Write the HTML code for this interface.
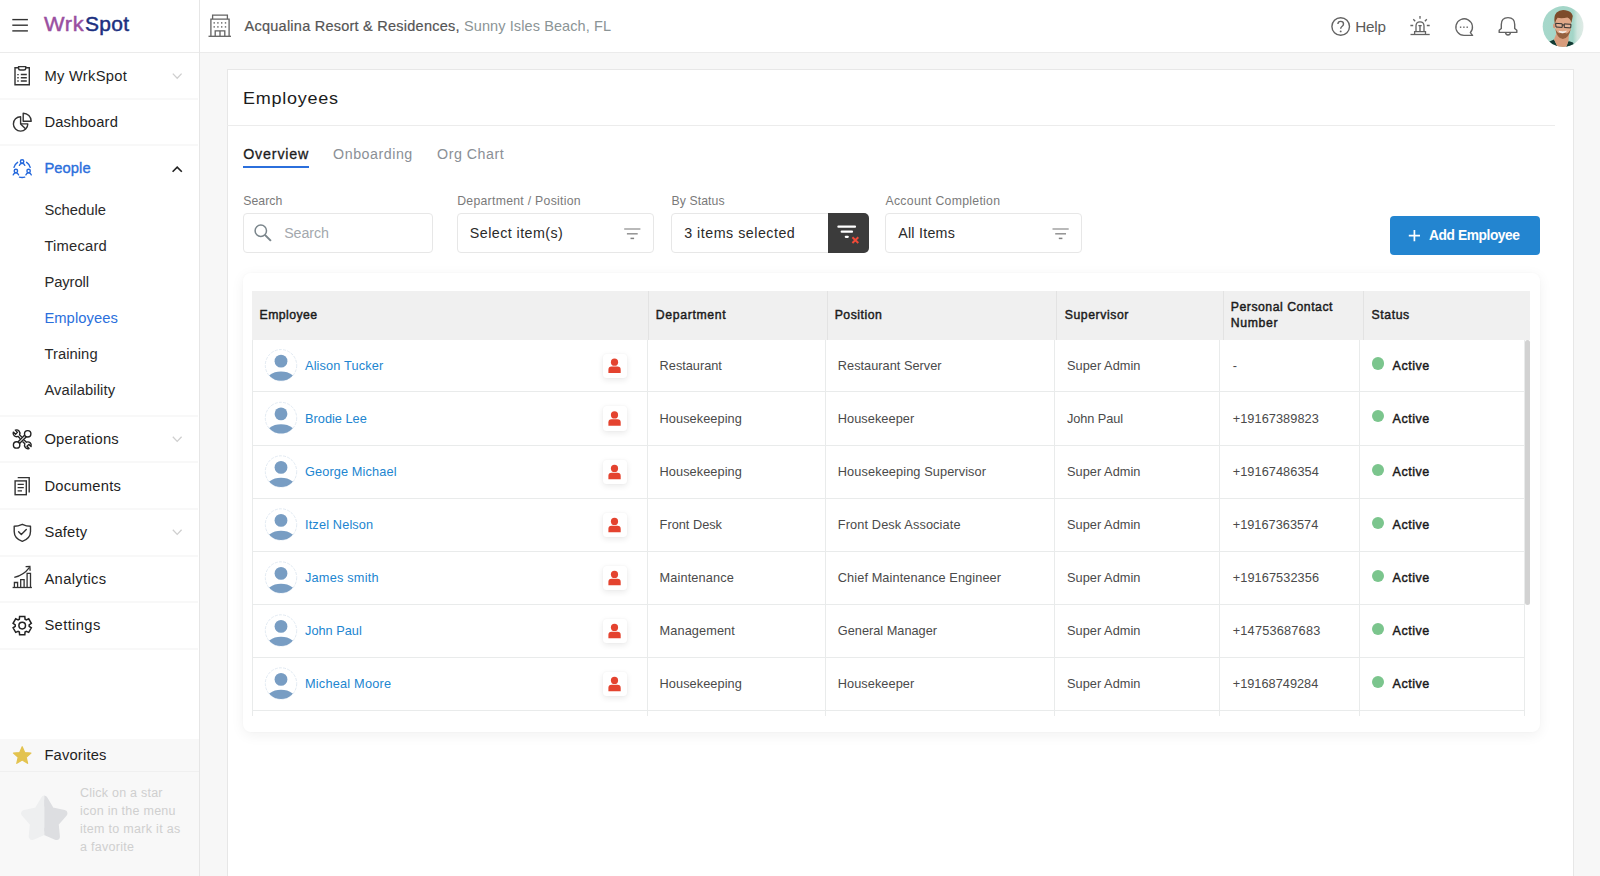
<!DOCTYPE html>
<html lang="en"><head><meta charset="utf-8"><title>WrkSpot - Employees</title>
<style>
html,body{margin:0;padding:0}
body{width:1600px;height:876px;overflow:hidden;background:#f7f7f7;font-family:"Liberation Sans",Arial,sans-serif;position:relative}
.t{position:absolute;white-space:pre;display:block}
.b{position:absolute;box-sizing:border-box}
svg{position:absolute;overflow:visible}
</style></head><body>
<div class="b" style="left:0px;top:0px;width:1600px;height:53px;background:#fff;border-bottom:1px solid #ebebeb;"></div>
<div class="b" style="left:0px;top:0px;width:200px;height:876px;background:#fff;border-right:1px solid #e6e6e6;"></div>
<div class="b" style="left:0px;top:52px;width:199px;height:1px;background:#ebebeb;"></div>
<div class="b" style="left:227px;top:69px;width:1347px;height:830px;background:#fff;border:1px solid #e7e7e7;"></div>
<div class="b" style="left:227px;top:125px;width:1328px;height:1px;background:#ececec;"></div>
<aside aria-label="Main navigation">
<div class="b" style="left:0px;top:98px;width:198px;height:2px;background:#f8f8f8;"></div>
<div class="b" style="left:0px;top:144px;width:198px;height:2px;background:#f8f8f8;"></div>
<div class="b" style="left:0px;top:415.3px;width:198px;height:2px;background:#f8f8f8;"></div>
<div class="b" style="left:0px;top:461.3px;width:198px;height:2px;background:#f8f8f8;"></div>
<div class="b" style="left:0px;top:508px;width:198px;height:2px;background:#f8f8f8;"></div>
<div class="b" style="left:0px;top:554.5px;width:198px;height:2px;background:#f8f8f8;"></div>
<div class="b" style="left:0px;top:601.4px;width:198px;height:2px;background:#f8f8f8;"></div>
<div class="b" style="left:0px;top:648.3px;width:198px;height:2px;background:#f8f8f8;"></div>
<span class="t" style="left:44.40px;top:66.00px;font-size:14.75px;line-height:20px;color:#1f1f1f;letter-spacing:0.262px;">My WrkSpot</span>
<span class="t" style="left:44.40px;top:112.00px;font-size:14.75px;line-height:20px;color:#1f1f1f;letter-spacing:0.168px;">Dashboard</span>
<span class="t" style="left:44.40px;top:158.00px;font-size:14.75px;line-height:20px;color:#2b6fdc;letter-spacing:0.054px;-webkit-text-stroke:0.35px #2b6fdc;">People</span>
<span class="t" style="left:44.40px;top:200.00px;font-size:14.75px;line-height:20px;color:#2a2a2a;letter-spacing:-0.001px;">Schedule</span>
<span class="t" style="left:44.40px;top:236.00px;font-size:14.75px;line-height:20px;color:#2a2a2a;letter-spacing:0.211px;">Timecard</span>
<span class="t" style="left:44.40px;top:272.00px;font-size:14.75px;line-height:20px;color:#2a2a2a;letter-spacing:-0.081px;">Payroll</span>
<span class="t" style="left:44.40px;top:308.00px;font-size:14.75px;line-height:20px;color:#2b6fdc;letter-spacing:0.054px;">Employees</span>
<span class="t" style="left:44.40px;top:344.00px;font-size:14.75px;line-height:20px;color:#2a2a2a;letter-spacing:0.065px;">Training</span>
<span class="t" style="left:44.40px;top:380.00px;font-size:14.75px;line-height:20px;color:#2a2a2a;letter-spacing:0.117px;">Availability</span>
<span class="t" style="left:44.40px;top:429.00px;font-size:14.75px;line-height:20px;color:#1f1f1f;letter-spacing:0.239px;">Operations</span>
<span class="t" style="left:44.40px;top:476.00px;font-size:14.75px;line-height:20px;color:#1f1f1f;letter-spacing:0.250px;">Documents</span>
<span class="t" style="left:44.40px;top:522.00px;font-size:14.75px;line-height:20px;color:#1f1f1f;letter-spacing:0.197px;">Safety</span>
<span class="t" style="left:44.40px;top:569.00px;font-size:14.75px;line-height:20px;color:#1f1f1f;letter-spacing:0.347px;">Analytics</span>
<span class="t" style="left:44.40px;top:615.00px;font-size:14.75px;line-height:20px;color:#1f1f1f;letter-spacing:0.372px;">Settings</span>
<div class="b" style="left:0px;top:739px;width:199px;height:137px;background:#f8f8f8;"></div>
<div class="b" style="left:0px;top:771px;width:199px;height:1px;background:#f0f0f0;"></div>
<span class="t" style="left:44.40px;top:745.00px;font-size:14.75px;line-height:20px;color:#1f1f1f;letter-spacing:0.168px;">Favorites</span>
<span class="t" style="left:80.00px;top:783.00px;font-size:12.5px;line-height:20px;color:#cfcfcf;letter-spacing:0.236px;">Click on a star</span>
<span class="t" style="left:80.00px;top:801.00px;font-size:12.5px;line-height:20px;color:#cfcfcf;letter-spacing:0.252px;">icon in the menu</span>
<span class="t" style="left:80.00px;top:819.00px;font-size:12.5px;line-height:20px;color:#cfcfcf;letter-spacing:0.296px;">item to mark it as</span>
<span class="t" style="left:80.00px;top:837.00px;font-size:12.5px;line-height:20px;color:#cfcfcf;letter-spacing:0.287px;">a favorite</span>
</aside>
<header>
<span class="t" style="left:43.80px;top:14.00px;font-size:19.8px;line-height:20px;color:#9a4fa0;letter-spacing:0.588px;-webkit-text-stroke:0.45px #9a4fa0;transform:scaleX(1.1);transform-origin:0 0;">Wrk</span>
<span class="t" style="left:85.20px;top:14.00px;font-size:19.8px;line-height:20px;color:#1b2f80;letter-spacing:0.322px;-webkit-text-stroke:0.45px #1b2f80;transform:scaleX(1.06);transform-origin:0 0;">Spot</span>
<span class="t" style="left:244.60px;top:16.00px;font-size:14.5px;line-height:20px;color:#555;letter-spacing:0.240px;-webkit-text-stroke:0.2px #555;">Acqualina Resort &amp; Residences,</span>
<span class="t" style="left:464.00px;top:16.00px;font-size:14.5px;line-height:20px;color:#8b9496;letter-spacing:0.096px;">Sunny Isles Beach, FL</span>
<span class="t" style="left:1355.30px;top:17.00px;font-size:15.25px;line-height:20px;color:#5a5a5a;letter-spacing:-0.255px;">Help</span>
</header>
<main>
<span class="t" style="left:242.60px;top:89.00px;font-size:17px;line-height:20px;color:#1c1c1c;letter-spacing:0.691px;transform:scaleX(1.06);transform-origin:0 0;">Employees</span>
<span class="t" style="left:243.20px;top:144.00px;font-size:14.25px;line-height:20px;color:#1c1c1c;letter-spacing:0.830px;-webkit-text-stroke:0.3px #1c1c1c;">Overview</span>
<div class="b" style="left:243px;top:165.5px;width:65.5px;height:2px;background:#2b6fdc;"></div>
<span class="t" style="left:333.10px;top:144.00px;font-size:14.25px;line-height:20px;color:#8b9096;letter-spacing:0.525px;">Onboarding</span>
<span class="t" style="left:437.10px;top:144.00px;font-size:14.25px;line-height:20px;color:#8b9096;letter-spacing:0.505px;">Org Chart</span>
<span class="t" style="left:243.20px;top:191.00px;font-size:12.25px;line-height:20px;color:#7a7a7a;letter-spacing:0.057px;">Search</span>
<span class="t" style="left:457.20px;top:191.00px;font-size:12.25px;line-height:20px;color:#7a7a7a;letter-spacing:0.285px;">Department / Position</span>
<span class="t" style="left:671.50px;top:191.00px;font-size:12.25px;line-height:20px;color:#7a7a7a;letter-spacing:0.084px;">By Status</span>
<span class="t" style="left:885.50px;top:191.00px;font-size:12.25px;line-height:20px;color:#7a7a7a;letter-spacing:0.287px;">Account Completion</span>
<div class="b" style="left:243px;top:213px;width:190px;height:40px;background:#fff;border:1px solid #e7e7e7;border-radius:4px;"></div>
<div class="b" style="left:457px;top:213px;width:197px;height:40px;background:#fff;border:1px solid #e7e7e7;border-radius:4px;"></div>
<div class="b" style="left:671px;top:213px;width:197px;height:40px;background:#fff;border:1px solid #e7e7e7;border-radius:4px;"></div>
<div class="b" style="left:828px;top:213px;width:40.5px;height:40px;background:#3b3b3b;border-radius:0 5px 5px 0;"></div>
<div class="b" style="left:885px;top:213px;width:197px;height:40px;background:#fff;border:1px solid #e7e7e7;border-radius:4px;"></div>
<span class="t" style="left:284.20px;top:223.00px;font-size:14.25px;line-height:20px;color:#a3a8ad;letter-spacing:-0.070px;">Search</span>
<span class="t" style="left:469.80px;top:223.00px;font-size:14.25px;line-height:20px;color:#2a2a2a;letter-spacing:0.454px;">Select item(s)</span>
<span class="t" style="left:684.20px;top:223.00px;font-size:14.25px;line-height:20px;color:#2a2a2a;letter-spacing:0.509px;">3 items selected</span>
<span class="t" style="left:898.20px;top:223.00px;font-size:14.25px;line-height:20px;color:#2a2a2a;letter-spacing:0.246px;">All Items</span>
<div class="b" style="left:1389.5px;top:216px;width:150px;height:39px;background:#2385d0;border-radius:4px;"></div>
<span class="t" style="left:1429.00px;top:226.00px;font-size:13.75px;line-height:20px;color:#fff;letter-spacing:-0.410px;font-weight:700;">Add Employee</span>
<div class="b" style="left:243px;top:273px;width:1296.7px;height:459px;background:#fff;border-radius:8px;box-shadow:0 3px 14px rgba(0,0,0,0.06),0 0 3px rgba(0,0,0,0.025);"></div>
<div class="b" style="left:252.25px;top:291.25px;width:1277.75px;height:48.25px;background:#f0f0f0;"></div>
<div class="b" style="left:647.5px;top:291.25px;width:1px;height:48.25px;background:#e3e3e3;"></div>
<div class="b" style="left:826.5px;top:291.25px;width:1px;height:48.25px;background:#e3e3e3;"></div>
<div class="b" style="left:1056.3px;top:291.25px;width:1px;height:48.25px;background:#e3e3e3;"></div>
<div class="b" style="left:1222.7px;top:291.25px;width:1px;height:48.25px;background:#e3e3e3;"></div>
<div class="b" style="left:1363.2px;top:291.25px;width:1px;height:48.25px;background:#e3e3e3;"></div>
<span class="t" style="left:259.60px;top:305.00px;font-size:12.25px;line-height:20px;color:#1c1c1c;letter-spacing:0.418px;-webkit-text-stroke:0.45px #1c1c1c;">Employee</span>
<span class="t" style="left:655.80px;top:305.00px;font-size:12.25px;line-height:20px;color:#1c1c1c;letter-spacing:0.655px;-webkit-text-stroke:0.45px #1c1c1c;">Department</span>
<span class="t" style="left:834.70px;top:305.00px;font-size:12.25px;line-height:20px;color:#1c1c1c;letter-spacing:0.503px;-webkit-text-stroke:0.45px #1c1c1c;">Position</span>
<span class="t" style="left:1064.70px;top:305.00px;font-size:12.25px;line-height:20px;color:#1c1c1c;letter-spacing:0.572px;-webkit-text-stroke:0.45px #1c1c1c;">Supervisor</span>
<span class="t" style="left:1230.80px;top:297.00px;font-size:12.25px;line-height:20px;color:#1c1c1c;letter-spacing:0.515px;-webkit-text-stroke:0.45px #1c1c1c;">Personal Contact</span>
<span class="t" style="left:1230.80px;top:313.00px;font-size:12.25px;line-height:20px;color:#1c1c1c;letter-spacing:0.626px;-webkit-text-stroke:0.45px #1c1c1c;">Number</span>
<span class="t" style="left:1371.50px;top:305.00px;font-size:12.25px;line-height:20px;color:#1c1c1c;letter-spacing:0.594px;-webkit-text-stroke:0.45px #1c1c1c;">Status</span>
<div class="b" style="left:252.3px;top:339.5px;width:1px;height:376.5px;background:#e9ebeb;"></div>
<div class="b" style="left:646.6px;top:339.5px;width:1px;height:376.5px;background:#e9ebeb;"></div>
<div class="b" style="left:825.3px;top:339.5px;width:1px;height:376.5px;background:#e9ebeb;"></div>
<div class="b" style="left:1054.2px;top:339.5px;width:1px;height:376.5px;background:#e9ebeb;"></div>
<div class="b" style="left:1219.0px;top:339.5px;width:1px;height:376.5px;background:#e9ebeb;"></div>
<div class="b" style="left:1359.2px;top:339.5px;width:1px;height:376.5px;background:#e9ebeb;"></div>
<div class="b" style="left:1524.0px;top:339.5px;width:1px;height:376.5px;background:#e9ebeb;"></div>
<div class="b" style="left:252.5px;top:391px;width:1272px;height:1px;background:#e9ebeb;"></div>
<div class="b" style="left:252.5px;top:445px;width:1272px;height:1px;background:#e9ebeb;"></div>
<div class="b" style="left:252.5px;top:498px;width:1272px;height:1px;background:#e9ebeb;"></div>
<div class="b" style="left:252.5px;top:551px;width:1272px;height:1px;background:#e9ebeb;"></div>
<div class="b" style="left:252.5px;top:604px;width:1272px;height:1px;background:#e9ebeb;"></div>
<div class="b" style="left:252.5px;top:657px;width:1272px;height:1px;background:#e9ebeb;"></div>
<div class="b" style="left:252.5px;top:710px;width:1272px;height:1px;background:#e9ebeb;"></div>
<div class="b" style="left:1525px;top:340px;width:5px;height:265px;background:#d2d2d2;border-radius:2.5px;"></div>
<span class="t" style="left:305.00px;top:356.00px;font-size:12.75px;line-height:20px;color:#2185d0;letter-spacing:0.139px;">Alison Tucker</span>
<span class="t" style="left:659.60px;top:356.00px;font-size:12.75px;line-height:20px;color:#4a4a4a;letter-spacing:-0.008px;">Restaurant</span>
<span class="t" style="left:837.80px;top:356.00px;font-size:12.75px;line-height:20px;color:#4a4a4a;letter-spacing:0.021px;">Restaurant Server</span>
<span class="t" style="left:1067.00px;top:356.00px;font-size:12.75px;line-height:20px;color:#4a4a4a;letter-spacing:0.040px;">Super Admin</span>
<span class="t" style="left:1232.70px;top:356.00px;font-size:12.75px;line-height:20px;color:#4a4a4a;letter-spacing:0.000px;">-</span>
<span class="t" style="left:1392.60px;top:356.00px;font-size:12.5px;line-height:20px;color:#1a1a1a;letter-spacing:0.532px;-webkit-text-stroke:0.45px #1a1a1a;">Active</span>
<div class="b" style="left:1372px;top:357.35px;width:12.25px;height:12.25px;background:#7bc58d;border-radius:50%;"></div>
<div class="b" style="left:603px;top:353.65px;width:24px;height:24.2px;background:#fff;border-radius:3.5px;box-shadow:0 2px 6px rgba(0,0,0,0.09),0 0 2px rgba(0,0,0,0.04);"></div>
<span class="t" style="left:305.00px;top:409.00px;font-size:12.75px;line-height:20px;color:#2185d0;letter-spacing:0.014px;">Brodie Lee</span>
<span class="t" style="left:659.60px;top:409.00px;font-size:12.75px;line-height:20px;color:#4a4a4a;letter-spacing:0.062px;">Housekeeping</span>
<span class="t" style="left:837.80px;top:409.00px;font-size:12.75px;line-height:20px;color:#4a4a4a;letter-spacing:0.056px;">Housekeeper</span>
<span class="t" style="left:1067.00px;top:409.00px;font-size:12.75px;line-height:20px;color:#4a4a4a;letter-spacing:-0.089px;">John Paul</span>
<span class="t" style="left:1232.70px;top:409.00px;font-size:12.75px;line-height:20px;color:#4a4a4a;letter-spacing:0.059px;">+19167389823</span>
<span class="t" style="left:1392.60px;top:409.00px;font-size:12.5px;line-height:20px;color:#1a1a1a;letter-spacing:0.532px;-webkit-text-stroke:0.45px #1a1a1a;">Active</span>
<div class="b" style="left:1372px;top:410.1px;width:12.25px;height:12.25px;background:#7bc58d;border-radius:50%;"></div>
<div class="b" style="left:603px;top:406.4px;width:24px;height:24.2px;background:#fff;border-radius:3.5px;box-shadow:0 2px 6px rgba(0,0,0,0.09),0 0 2px rgba(0,0,0,0.04);"></div>
<span class="t" style="left:305.00px;top:462.00px;font-size:12.75px;line-height:20px;color:#2185d0;letter-spacing:0.115px;">George Michael</span>
<span class="t" style="left:659.60px;top:462.00px;font-size:12.75px;line-height:20px;color:#4a4a4a;letter-spacing:0.062px;">Housekeeping</span>
<span class="t" style="left:837.80px;top:462.00px;font-size:12.75px;line-height:20px;color:#4a4a4a;letter-spacing:0.100px;">Housekeeping Supervisor</span>
<span class="t" style="left:1067.00px;top:462.00px;font-size:12.75px;line-height:20px;color:#4a4a4a;letter-spacing:0.040px;">Super Admin</span>
<span class="t" style="left:1232.70px;top:462.00px;font-size:12.75px;line-height:20px;color:#4a4a4a;letter-spacing:0.059px;">+19167486354</span>
<span class="t" style="left:1392.60px;top:462.00px;font-size:12.5px;line-height:20px;color:#1a1a1a;letter-spacing:0.532px;-webkit-text-stroke:0.45px #1a1a1a;">Active</span>
<div class="b" style="left:1372px;top:463.6px;width:12.25px;height:12.25px;background:#7bc58d;border-radius:50%;"></div>
<div class="b" style="left:603px;top:459.9px;width:24px;height:24.2px;background:#fff;border-radius:3.5px;box-shadow:0 2px 6px rgba(0,0,0,0.09),0 0 2px rgba(0,0,0,0.04);"></div>
<span class="t" style="left:305.00px;top:515.00px;font-size:12.75px;line-height:20px;color:#2185d0;letter-spacing:0.144px;">Itzel Nelson</span>
<span class="t" style="left:659.60px;top:515.00px;font-size:12.75px;line-height:20px;color:#4a4a4a;letter-spacing:0.006px;">Front Desk</span>
<span class="t" style="left:837.80px;top:515.00px;font-size:12.75px;line-height:20px;color:#4a4a4a;letter-spacing:0.118px;">Front Desk Associate</span>
<span class="t" style="left:1067.00px;top:515.00px;font-size:12.75px;line-height:20px;color:#4a4a4a;letter-spacing:0.040px;">Super Admin</span>
<span class="t" style="left:1232.70px;top:515.00px;font-size:12.75px;line-height:20px;color:#4a4a4a;letter-spacing:0.014px;">+19167363574</span>
<span class="t" style="left:1392.60px;top:515.00px;font-size:12.5px;line-height:20px;color:#1a1a1a;letter-spacing:0.532px;-webkit-text-stroke:0.45px #1a1a1a;">Active</span>
<div class="b" style="left:1372px;top:516.6px;width:12.25px;height:12.25px;background:#7bc58d;border-radius:50%;"></div>
<div class="b" style="left:603px;top:512.9px;width:24px;height:24.2px;background:#fff;border-radius:3.5px;box-shadow:0 2px 6px rgba(0,0,0,0.09),0 0 2px rgba(0,0,0,0.04);"></div>
<span class="t" style="left:305.00px;top:568.00px;font-size:12.75px;line-height:20px;color:#2185d0;letter-spacing:0.194px;">James smith</span>
<span class="t" style="left:659.60px;top:568.00px;font-size:12.75px;line-height:20px;color:#4a4a4a;letter-spacing:0.119px;">Maintenance</span>
<span class="t" style="left:837.80px;top:568.00px;font-size:12.75px;line-height:20px;color:#4a4a4a;letter-spacing:0.092px;">Chief Maintenance Engineer</span>
<span class="t" style="left:1067.00px;top:568.00px;font-size:12.75px;line-height:20px;color:#4a4a4a;letter-spacing:0.040px;">Super Admin</span>
<span class="t" style="left:1232.70px;top:568.00px;font-size:12.75px;line-height:20px;color:#4a4a4a;letter-spacing:0.078px;">+19167532356</span>
<span class="t" style="left:1392.60px;top:568.00px;font-size:12.5px;line-height:20px;color:#1a1a1a;letter-spacing:0.532px;-webkit-text-stroke:0.45px #1a1a1a;">Active</span>
<div class="b" style="left:1372px;top:569.6px;width:12.25px;height:12.25px;background:#7bc58d;border-radius:50%;"></div>
<div class="b" style="left:603px;top:565.9px;width:24px;height:24.2px;background:#fff;border-radius:3.5px;box-shadow:0 2px 6px rgba(0,0,0,0.09),0 0 2px rgba(0,0,0,0.04);"></div>
<span class="t" style="left:305.00px;top:621.00px;font-size:12.75px;line-height:20px;color:#2185d0;letter-spacing:0.011px;">John Paul</span>
<span class="t" style="left:659.60px;top:621.00px;font-size:12.75px;line-height:20px;color:#4a4a4a;letter-spacing:0.087px;">Management</span>
<span class="t" style="left:837.80px;top:621.00px;font-size:12.75px;line-height:20px;color:#4a4a4a;letter-spacing:-0.002px;">General Manager</span>
<span class="t" style="left:1067.00px;top:621.00px;font-size:12.75px;line-height:20px;color:#4a4a4a;letter-spacing:0.040px;">Super Admin</span>
<span class="t" style="left:1232.70px;top:621.00px;font-size:12.75px;line-height:20px;color:#4a4a4a;letter-spacing:0.196px;">+14753687683</span>
<span class="t" style="left:1392.60px;top:621.00px;font-size:12.5px;line-height:20px;color:#1a1a1a;letter-spacing:0.532px;-webkit-text-stroke:0.45px #1a1a1a;">Active</span>
<div class="b" style="left:1372px;top:622.6px;width:12.25px;height:12.25px;background:#7bc58d;border-radius:50%;"></div>
<div class="b" style="left:603px;top:618.9px;width:24px;height:24.2px;background:#fff;border-radius:3.5px;box-shadow:0 2px 6px rgba(0,0,0,0.09),0 0 2px rgba(0,0,0,0.04);"></div>
<span class="t" style="left:305.00px;top:674.00px;font-size:12.75px;line-height:20px;color:#2185d0;letter-spacing:0.199px;">Micheal Moore</span>
<span class="t" style="left:659.60px;top:674.00px;font-size:12.75px;line-height:20px;color:#4a4a4a;letter-spacing:0.062px;">Housekeeping</span>
<span class="t" style="left:837.80px;top:674.00px;font-size:12.75px;line-height:20px;color:#4a4a4a;letter-spacing:0.056px;">Housekeeper</span>
<span class="t" style="left:1067.00px;top:674.00px;font-size:12.75px;line-height:20px;color:#4a4a4a;letter-spacing:0.040px;">Super Admin</span>
<span class="t" style="left:1232.70px;top:674.00px;font-size:12.75px;line-height:20px;color:#4a4a4a;letter-spacing:0.014px;">+19168749284</span>
<span class="t" style="left:1392.60px;top:674.00px;font-size:12.5px;line-height:20px;color:#1a1a1a;letter-spacing:0.532px;-webkit-text-stroke:0.45px #1a1a1a;">Active</span>
<div class="b" style="left:1372px;top:675.6px;width:12.25px;height:12.25px;background:#7bc58d;border-radius:50%;"></div>
<div class="b" style="left:603px;top:671.9px;width:24px;height:24.2px;background:#fff;border-radius:3.5px;box-shadow:0 2px 6px rgba(0,0,0,0.09),0 0 2px rgba(0,0,0,0.04);"></div>
</main>
<svg style="left:0;top:0" width="1600" height="876" viewBox="0 0 1600 876"><path d="M12.3 19.6H27.9" stroke="#333" stroke-width="1.4" fill="none"/><path d="M12.3 25.2H27.9" stroke="#333" stroke-width="1.4" fill="none"/><path d="M12.3 30.9H27.9" stroke="#333" stroke-width="1.4" fill="none"/><g stroke="#636363" stroke-width="1.3" fill="none"><path d="M208.5 36.3H231"/><path d="M210.9 36V19.2H229.1V36"/><path d="M212.6 19V15.2H227.4V19"/><path d="M215.2 36V30.8H224.8V36M220 30.8V36"/></g><rect x="213.5" y="22.2" width="1.4" height="1.4" fill="#636363"/><rect x="217.20000000000002" y="22.2" width="1.4" height="1.4" fill="#636363"/><rect x="221.0" y="22.2" width="1.4" height="1.4" fill="#636363"/><rect x="224.8" y="22.2" width="1.4" height="1.4" fill="#636363"/><rect x="213.5" y="26.2" width="1.4" height="1.4" fill="#636363"/><rect x="217.20000000000002" y="26.2" width="1.4" height="1.4" fill="#636363"/><rect x="221.0" y="26.2" width="1.4" height="1.4" fill="#636363"/><rect x="224.8" y="26.2" width="1.4" height="1.4" fill="#636363"/><g stroke="#333" stroke-width="1.4" fill="none"><path d="M18.6 67.7H15V84.8H29.3V67.7H25.7"/><path d="M18.6 66.6H25.7V68.2Q25.7 70 23.9 70H20.4Q18.6 70 18.6 68.2Z"/><path d="M20.8 74.6H26.8M20.8 77.8H26.8M20.8 81H26.8" stroke-width="1.5"/><path d="M17.3 74.6H18.7M17.3 77.8H18.7M17.3 81H18.7" stroke-width="1.4"/></g><g stroke="#333" stroke-width="1.4" fill="none" stroke-linejoin="round"><path d="M20.6 116.7A7.2 7.2 0 1 0 27.8 123.9H20.6Z"/><path d="M20.6 123.9L25.7 129"/><path d="M23.2 113.2A8 8 0 0 1 31.2 121.2H23.2Z"/></g><g stroke="#2468dc" stroke-width="1.4" fill="none" stroke-linecap="round"><circle cx="22.1" cy="161.4" r="1.7"/><path d="M19.400000000000002 165.4Q20.1 163.20000000000002 22.1 163.20000000000002Q24.1 163.20000000000002 24.8 165.4"/><circle cx="15.9" cy="170.9" r="1.7"/><path d="M13.2 174.9Q13.9 172.70000000000002 15.9 172.70000000000002Q17.9 172.70000000000002 18.6 174.9"/><circle cx="28.6" cy="170.9" r="1.7"/><path d="M25.900000000000002 174.9Q26.6 172.70000000000002 28.6 172.70000000000002Q30.6 172.70000000000002 31.3 174.9"/><path d="M17.6 162.3A8.4 8.4 0 0 0 14.0 167.3"/><path d="M26.6 162.3A8.4 8.4 0 0 1 30.2 167.3"/><path d="M19.5 177.1A8.4 8.4 0 0 0 24.7 177.1"/></g><path d="M172.79999999999998 73.6L177.2 78.2L181.6 73.6" stroke="#cfcfcf" stroke-width="1.3" fill="none"/><path d="M172.79999999999998 436.8L177.2 441.4L181.6 436.8" stroke="#cfcfcf" stroke-width="1.3" fill="none"/><path d="M172.79999999999998 529.8000000000001L177.2 534.4000000000001L181.6 529.8000000000001" stroke="#cfcfcf" stroke-width="1.3" fill="none"/><path d="M172.6 171.8L177.2 167.1L181.8 171.8" stroke="#222" stroke-width="1.6" fill="none"/><g stroke="#222" stroke-width="1.4" fill="none" stroke-linejoin="round"><circle cx="27.7" cy="433.8" r="3.2"/><circle cx="16.6" cy="444.9" r="3.2"/><path d="M19.53 443.59L26.39 436.73M17.91 441.97L24.77 435.11"/><path d="M21.89 437.12L19.56 434.79A3.4 3.4 0 0 0 15.34 430.11L17.42 432.38L15.58 434.22L13.31 432.14A3.4 3.4 0 0 0 17.99 436.36L20.32 438.69"/><path d="M22.51 441.48L24.84 443.81A3.4 3.4 0 0 0 29.06 448.49L26.98 446.22L28.82 444.38L31.09 446.46A3.4 3.4 0 0 0 26.41 442.24L24.08 439.91"/></g><g stroke="#333" stroke-width="1.4" fill="none"><rect x="15.1" y="480.9" width="11.2" height="13.8"/><path d="M17.7 477.6H29.2V492.5"/><path d="M17.6 484.4H23.8M17.6 487.6H23.8M17.6 490.8H22" stroke-width="1.3"/></g><g stroke="#333" stroke-width="1.4" fill="none" stroke-linejoin="round" stroke-linecap="round"><path d="M22.3 524.3Q18 526.2 14.2 526.2V531.5Q14.2 538.5 22.3 541.4Q30.5 538.5 30.5 531.5V526.2Q26.6 526.2 22.3 524.3Z"/><path d="M18.6 531.8L21.3 534.5L26.3 529.4"/></g><g stroke="#333" stroke-width="1.3" fill="none"><path d="M12.6 587.5H31.9"/><path d="M14.4 587.3V582.5H17.6V587.3M20.7 587.3V579.6H24.1V587.3M27.1 587.3V573.3H30.5V587.3"/><path d="M14.3 577.3Q23.5 575.4 29.5 567.3"/><path d="M25.6 566.6L29.9 566.5L30.1 570.7"/></g><g stroke="#222" stroke-width="1.5" fill="none" stroke-linejoin="miter"><path d="M19.35 619.21L19.58 616.57L24.82 616.57L25.05 619.21L26.31 619.94L28.71 618.82L31.33 623.36L29.16 624.87L29.16 626.33L31.33 627.84L28.71 632.38L26.31 631.26L25.05 631.99L24.82 634.63L19.58 634.63L19.35 631.99L18.09 631.26L15.69 632.38L13.07 627.84L15.24 626.33L15.24 624.87L13.07 623.36L15.69 618.82L18.09 619.94Z"/><circle cx="22.2" cy="625.6" r="3.3"/></g><path d="M22.20 746.70L24.67 752.50L30.95 753.06L26.19 757.20L27.61 763.34L22.20 760.10L16.79 763.34L18.21 757.20L13.45 753.06L19.73 752.50Z" fill="#e3c34f" stroke="#e3c34f" stroke-width="1.2" stroke-linejoin="round"/><defs><clipPath id="cl"><rect x="0" y="780" width="44.3" height="80"/></clipPath><clipPath id="cr"><rect x="44.3" y="780" width="40" height="80"/></clipPath></defs><path d="M44.30 799.20L51.00 810.58L63.89 813.43L55.14 823.32L56.41 836.47L44.30 831.20L32.19 836.47L33.46 823.32L24.71 813.43L37.60 810.58Z" fill="#eeeff0" stroke="#eeeff0" stroke-width="7" stroke-linejoin="round" clip-path="url(#cl)"/><path d="M44.30 799.20L51.00 810.58L63.89 813.43L55.14 823.32L56.41 836.47L44.30 831.20L32.19 836.47L33.46 823.32L24.71 813.43L37.60 810.58Z" fill="#dddee1" stroke="#dddee1" stroke-width="7" stroke-linejoin="round" clip-path="url(#cr)"/><circle cx="1340.7" cy="26.5" r="8.8" stroke="#636363" stroke-width="1.4" fill="none"/><path d="M1337.9 24.1Q1337.9 21.4 1340.7 21.4Q1343.5 21.4 1343.5 24Q1343.5 25.6 1341.9 26.5Q1340.7 27.2 1340.7 28.8" stroke="#636363" stroke-width="1.4" fill="none"/><circle cx="1340.7" cy="31.4" r="0.95" fill="#636363"/><g stroke="#636363" stroke-width="1.3" fill="none"><path d="M1410.5 34.5H1429.7"/><path d="M1414.6 34.3V31.7H1425.5V34.3"/><path d="M1416 31.6V26Q1416 21.9 1420 21.9Q1424 21.9 1424 26V31.6"/><path d="M1418.4 25.6H1421.7M1420 25.6V31.4" stroke-width="1.4"/><path d="M1420 16V18.7M1413.3 19.2L1415.2 21.3M1426.8 19.2L1424.9 21.3M1410.4 25.5H1413.2M1426.8 25.5H1429.7"/></g><path d="M1472.6 35.4H1464A8.3 8.3 0 1 1 1470.3 32.7Z" stroke="#636363" stroke-width="1.3" fill="none" stroke-linejoin="round"/><rect x="1459.8999999999999" y="26.5" width="1.4" height="1.4" fill="#636363"/><rect x="1463.2" y="26.5" width="1.4" height="1.4" fill="#636363"/><rect x="1466.5" y="26.5" width="1.4" height="1.4" fill="#636363"/><g stroke="#636363" stroke-width="1.4" fill="none" stroke-linejoin="round"><path d="M1499.2 32.4V30.3L1501.3 28.4V24.5Q1501.3 17.6 1508 17.6Q1514.7 17.6 1514.7 24.5V28.4L1516.8 30.3V32.4Z"/><path d="M1505.6 32.6Q1505.6 35 1508 35Q1510.4 35 1510.4 32.6"/></g><defs><clipPath id="av"><circle cx="1563.1" cy="26.5" r="20.4"/></clipPath><linearGradient id="avbg" x1="0" x2="1" y1="0" y2="0"><stop offset="0" stop-color="#a7d8cb"/><stop offset="0.72" stop-color="#a3d5c7"/><stop offset="0.82" stop-color="#cfe6de"/><stop offset="1" stop-color="#e4ece8"/></linearGradient></defs><g clip-path="url(#av)"><rect x="1542" y="5" width="43" height="43" fill="url(#avbg)"/><path d="M1546 48L1549.5 41.5L1554 39.5L1558 47H1566L1568.5 41L1573 42.5L1575 48Z" fill="#123a33"/><path d="M1554 39.5L1556.5 33H1569L1568.5 41L1566 48H1558Z" fill="#d79c7c"/><ellipse cx="1554.3" cy="26" rx="1.3" ry="2.4" fill="#d4977a"/><path d="M1555 22Q1554.6 14.5 1563 14.5Q1571.4 14.5 1571.2 23Q1571.2 31 1568.4 35.2Q1566 38.8 1562.8 38.8Q1559.4 38.8 1557.2 35Q1555 31 1555 22Z" fill="#e0a888"/><path d="M1555.3 28.5Q1556 33.5 1558 36.2Q1560 38.9 1562.8 38.9Q1565.8 38.9 1568 36Q1570 33 1570.9 28.5Q1569 33 1566.5 33.4Q1563 31.6 1559.3 33.2Q1556.8 32.5 1555.3 28.5Z" fill="#94603f"/><path d="M1558.8 31.3Q1562.6 34.6 1566.4 31.2Q1562.6 32.2 1558.8 31.3Z" fill="#fff" stroke="#f6f2ee" stroke-width="0.7"/><path d="M1554.8 24Q1553.2 16.5 1556.6 12.6Q1560 9.2 1565.5 10.2Q1571.5 11 1572.8 16L1571.4 23Q1570.6 18.5 1567.4 17.4Q1562 18.8 1557.6 17.8Q1555.6 20 1554.8 24Z" fill="#7d4c2b"/><path d="M1555.6 23.3L1562.2 23.8V27.4L1556 27ZM1564.2 23.9L1571 24.3L1570.7 27.9L1564.3 27.5ZM1562.2 25H1564.2" stroke="#30302f" stroke-width="1" fill="rgba(255,255,255,0.12)"/></g><g stroke="#7a858b" fill="none"><circle cx="260.8" cy="230.8" r="5.7" stroke-width="1.5"/><path d="M264.9 234.9L270.9 240.9" stroke-width="2"/></g><g stroke-width="1.5" fill="none"><path d="M624.1999999999999 229H640.4" stroke="#a2a2a2"/><path d="M626.9 233.8H637.6999999999999" stroke="#929292"/><path d="M630.5 238.4H634.0999999999999" stroke="#828282"/></g><g stroke-width="1.5" fill="none"><path d="M1052.5 229H1068.6999999999998" stroke="#a2a2a2"/><path d="M1055.1999999999998 233.8H1066.0" stroke="#929292"/><path d="M1058.8 238.4H1062.3999999999999" stroke="#828282"/></g><g stroke="#fff" stroke-width="2.2" fill="none" stroke-linecap="round"><path d="M838.4 226.7H855M841.7 231.7H852M845.8 236.8H847.8"/></g><path d="M852.4 237.3L858.3 242.9M858.3 237.3L852.4 242.9" stroke="#f04a38" stroke-width="2" fill="none"/><path d="M1408.8 235.6H1420M1414.4 230V241.2" stroke="#fff" stroke-width="1.7" fill="none"/><defs><clipPath id="a0"><circle cx="281" cy="365.25" r="15.6"/></clipPath></defs><circle cx="281" cy="365.25" r="15.7" fill="#fff" stroke="#dbe4ef" stroke-width="0.8" stroke-dasharray="3 1.2"/><g clip-path="url(#a0)" fill="#789dc3"><circle cx="281" cy="361.15" r="6.4"/><ellipse cx="281" cy="383.25" rx="16" ry="11.7"/></g><g fill="#e4432f"><circle cx="614.5" cy="362.15" r="3.6"/><path d="M608.4 373.05V369.75Q608.4 366.55 611.6 366.55H617.5Q620.7 366.55 620.7 369.75V373.05Z"/></g><defs><clipPath id="a1"><circle cx="281" cy="418.0" r="15.6"/></clipPath></defs><circle cx="281" cy="418.0" r="15.7" fill="#fff" stroke="#dbe4ef" stroke-width="0.8" stroke-dasharray="3 1.2"/><g clip-path="url(#a1)" fill="#789dc3"><circle cx="281" cy="413.9" r="6.4"/><ellipse cx="281" cy="436.0" rx="16" ry="11.7"/></g><g fill="#e4432f"><circle cx="614.5" cy="414.9" r="3.6"/><path d="M608.4 425.8V422.5Q608.4 419.3 611.6 419.3H617.5Q620.7 419.3 620.7 422.5V425.8Z"/></g><defs><clipPath id="a2"><circle cx="281" cy="471.5" r="15.6"/></clipPath></defs><circle cx="281" cy="471.5" r="15.7" fill="#fff" stroke="#dbe4ef" stroke-width="0.8" stroke-dasharray="3 1.2"/><g clip-path="url(#a2)" fill="#789dc3"><circle cx="281" cy="467.4" r="6.4"/><ellipse cx="281" cy="489.5" rx="16" ry="11.7"/></g><g fill="#e4432f"><circle cx="614.5" cy="468.4" r="3.6"/><path d="M608.4 479.3V476.0Q608.4 472.8 611.6 472.8H617.5Q620.7 472.8 620.7 476.0V479.3Z"/></g><defs><clipPath id="a3"><circle cx="281" cy="524.5" r="15.6"/></clipPath></defs><circle cx="281" cy="524.5" r="15.7" fill="#fff" stroke="#dbe4ef" stroke-width="0.8" stroke-dasharray="3 1.2"/><g clip-path="url(#a3)" fill="#789dc3"><circle cx="281" cy="520.4" r="6.4"/><ellipse cx="281" cy="542.5" rx="16" ry="11.7"/></g><g fill="#e4432f"><circle cx="614.5" cy="521.4" r="3.6"/><path d="M608.4 532.3V529.0Q608.4 525.8 611.6 525.8H617.5Q620.7 525.8 620.7 529.0V532.3Z"/></g><defs><clipPath id="a4"><circle cx="281" cy="577.5" r="15.6"/></clipPath></defs><circle cx="281" cy="577.5" r="15.7" fill="#fff" stroke="#dbe4ef" stroke-width="0.8" stroke-dasharray="3 1.2"/><g clip-path="url(#a4)" fill="#789dc3"><circle cx="281" cy="573.4" r="6.4"/><ellipse cx="281" cy="595.5" rx="16" ry="11.7"/></g><g fill="#e4432f"><circle cx="614.5" cy="574.4" r="3.6"/><path d="M608.4 585.3V582.0Q608.4 578.8 611.6 578.8H617.5Q620.7 578.8 620.7 582.0V585.3Z"/></g><defs><clipPath id="a5"><circle cx="281" cy="630.5" r="15.6"/></clipPath></defs><circle cx="281" cy="630.5" r="15.7" fill="#fff" stroke="#dbe4ef" stroke-width="0.8" stroke-dasharray="3 1.2"/><g clip-path="url(#a5)" fill="#789dc3"><circle cx="281" cy="626.4" r="6.4"/><ellipse cx="281" cy="648.5" rx="16" ry="11.7"/></g><g fill="#e4432f"><circle cx="614.5" cy="627.4" r="3.6"/><path d="M608.4 638.3V635.0Q608.4 631.8 611.6 631.8H617.5Q620.7 631.8 620.7 635.0V638.3Z"/></g><defs><clipPath id="a6"><circle cx="281" cy="683.5" r="15.6"/></clipPath></defs><circle cx="281" cy="683.5" r="15.7" fill="#fff" stroke="#dbe4ef" stroke-width="0.8" stroke-dasharray="3 1.2"/><g clip-path="url(#a6)" fill="#789dc3"><circle cx="281" cy="679.4" r="6.4"/><ellipse cx="281" cy="701.5" rx="16" ry="11.7"/></g><g fill="#e4432f"><circle cx="614.5" cy="680.4" r="3.6"/><path d="M608.4 691.3V688.0Q608.4 684.8 611.6 684.8H617.5Q620.7 684.8 620.7 688.0V691.3Z"/></g></svg>
</body></html>
